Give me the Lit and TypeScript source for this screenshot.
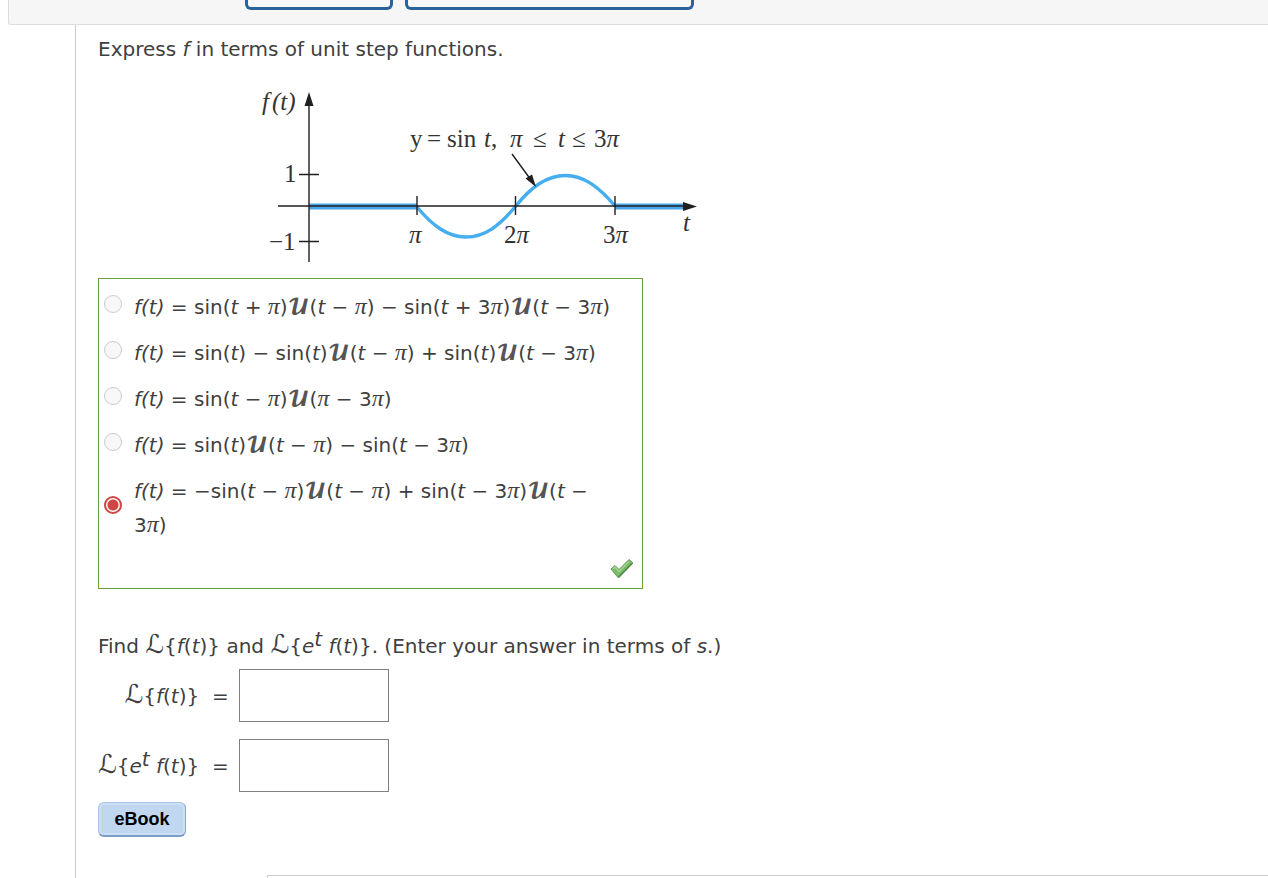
import { LitElement, html, svg, css } from "lit";
import { customElement, state } from "lit/decorators.js";

const pi = html`<i class="pi">π</i>`;
const t = html`<i>t</i>`;
const step = html`<span class="script step">𝓤</span>`;
const laplace = html`<span class="script laplace">ℒ</span>`;
const ft = html`<i>f</i>(${t})`;
const et = html`<i>e</i><sup>t</sup>`;

const options = [
  html`<i>f(t)</i> = sin(${t} + ${pi})${step}(${t} − ${pi}) − sin(${t} + 3${pi})${step}(${t} − 3${pi})`,
  html`<i>f(t)</i> = sin(${t}) − sin(${t})${step}(${t} − ${pi}) + sin(${t})${step}(${t} − 3${pi})`,
  html`<i>f(t)</i> = sin(${t} − ${pi})${step}(${pi} − 3${pi})`,
  html`<i>f(t)</i> = sin(${t})${step}(${t} − ${pi}) − sin(${t} − 3${pi})`,
  html`<i>f(t)</i> = −sin(${t} − ${pi})${step}(${t} − ${pi}) + sin(${t} − 3${pi})${step}(${t} − 3${pi})`,
];

@customElement("function-graph")
class FunctionGraph extends LitElement {
  static styles = css`
    :host { display: block; }
    svg { display: block; }
    text { font: 25px "Liberation Serif", serif; fill: #333; }
    .it { font-style: italic; }
    .axis { stroke: #231f20; stroke-width: 1.4; fill: none; }
    .curve { stroke: #46adee; stroke-width: 3.4; fill: none; }
    .flat { stroke: #46a6e8; stroke-width: 6; }
    .head { fill: #231f20; }
  `;
  render() {
    return html`<svg width="450" height="184" viewBox="256 84 450 184" role="img" aria-label="Graph of f(t)">
      ${svg`
        <path class="flat" d="M309 206.5H417M615 206.5H686"/>
        <path class="curve" d="M417 207C432 225 447 237 466 237C485 237 499 226 515.500 206.500C530 188 546 175.500 565 175.500C584 175.500 599 187 615 206"/>
        <path class="axis" d="M309 104V262M278 206H686M299 174.500H319M299 241.500H319M417 196V215M515.500 196V215M615 196V215M512 154L531 180"/>
        <path class="head" d="M309 92L313.500 106H304.500ZM697 206.500L683 211V202ZM536 187L525.500 178.500L532 174.500Z"/>
        <text x="262" y="110" class="it">f <tspan x="272">(t)</tspan></text>
        <text x="284" y="182">1</text>
        <text x="269" y="250">−1</text>
        <text x="410" y="147">y</text>
        <text x="427" y="147">=</text>
        <text x="447" y="147">sin</text>
        <text x="484" y="147"><tspan class="it">t</tspan>,</text>
        <text x="510" y="147" class="it">π</text>
        <text x="533" y="147">≤</text>
        <text x="558" y="147" class="it">t</text>
        <text x="572" y="147">≤</text>
        <text x="594" y="147">3<tspan class="it">π</tspan></text>
        <text x="409" y="243" class="it">π</text>
        <text x="504" y="243">2<tspan class="it">π</tspan></text>
        <text x="603" y="243">3<tspan class="it">π</tspan></text>
        <text x="683" y="231" class="it">t</text>
      `}
    </svg>`;
  }
}

@customElement("app-root")
class AppRoot extends LitElement {
  @state() selected = 4;

  static styles = css`
    :host {
      display: flex; flex-direction: column; min-height: 100vh; overflow: hidden;
      box-sizing: border-box; background: #fff; color: #404040;
      font: 20px/34px Verdana, "DejaVu Sans", sans-serif;
    }
    * { box-sizing: border-box; }
    .toolbar {
      display: flex; gap: 12px; height: 25px; margin-left: 8px; padding-left: 236px;
      background: #f6f6f6; border: solid #ddd; border-width: 0 0 1px 1px; border-radius: 0 0 0 3px;
    }
    .tool {
      width: 148px; height: 10px; padding: 0; background: #f8f8f8;
      border: 3px solid #29639a; border-top: 0; border-radius: 0 0 6px 6px;
    }
    .wide { width: 289px; }
    .question {
      flex: 1; display: flex; flex-direction: column; align-items: flex-start;
      margin-left: 75px; padding: 7px 0 0 22px; border-left: 1px solid #ccc;
    }
    p { margin: 0; }
    function-graph { margin: 18px 0 10px 158px; }
    .choices {
      width: 100%; max-width: 545px; margin: 0; padding: 11px 8px 8px 5px;
      border: 1px solid #6a9f3c; display: flex; flex-direction: column; gap: 12px;
    }
    .choice { display: flex; align-items: center; gap: 12px; padding-right: 8px; }
    .radio {
      flex: none; appearance: none; width: 18px; height: 18px; margin: 0 0 6px; border-radius: 50%;
      border: 1px solid #ccc; background: #f8f8f8;
    }
    .radio:checked {
      border: 2px solid #cf4744;
      background: radial-gradient(circle, #cf4744 5px, #fff 6px);
    }
    .check { align-self: flex-end; display: block; margin-top: 4px; }
    .pi { font-family: "Liberation Serif", serif; font-size: 24px; line-height: 1; }
    .script { line-height: 1; }
    .step { font-family: "DejaVu Math TeX Gyre", serif; color: #555; }
    .laplace { font-family: "DejaVu Sans", serif; font-size: 26px; }
    sup { font-size: 20px; font-style: italic; line-height: 0; vertical-align: 7px; }
    .find { margin-top: 40px; }
    .answers {
      display: grid; grid-template-columns: auto 150px; align-items: center;
      justify-items: end; gap: 17px 10px; margin-top: 6px;
    }
    .answer { width: 150px; height: 53px; border: 1px solid #808080; border-radius: 0; background: #fff; font: inherit; padding: 0 8px; }
    .ebook {
      width: 88px; height: 35px; margin-top: 10px; padding: 0; color: #000;
      font: bold 18px "Liberation Sans Narrow", "Liberation Sans", sans-serif;
      background: #c1d7f0; border: 1px solid #a9c5ea; border-bottom: 2px solid #7b9ccb;
      border-right-color: #86a5d2; border-radius: 6px; box-shadow: inset 0 0 0 2px #cddff2;
    }
    .next { align-self: stretch; height: 3px; margin: auto 0 0 169px; border: solid #ccc; border-width: 1px 0 0 1px; }
  `;

  render() {
    return html`
      <header class="toolbar">
        <button class="tool" aria-label="Previous"></button>
        <button class="tool wide" aria-label="Next"></button>
      </header>
      <main class="question">
        <p>Express <i>f</i> in terms of unit step functions.</p>
        <function-graph></function-graph>
        <div class="choices" role="radiogroup">
          ${options.map((o, i) => html`
            <div class="choice">
              <input class="radio" type="radio" name="f" id="f${i}"
                .checked=${this.selected === i} @change=${() => (this.selected = i)}>
              <label for="f${i}">${o}</label>
            </div>`)}
          <svg class="check" width="24" height="22" viewBox="0 0 24 22" aria-label="Correct">
            <path d="M1 11L5 7.500L9 11.500L19 1.500L23 5L8.500 20Z" fill="#7dbb6b" stroke="#5f9e52" stroke-linejoin="round"/>
            <path d="M3 11L5 9L9 13.500L19 3.500" fill="none" stroke="#a4d491" stroke-width="1.500"/>
            <path d="M8.500 19L22 5.500" stroke="#4a8945" stroke-width="1.500"/>
          </svg>
        </div>
        <p class="find">Find ${laplace}{${ft}} and ${laplace}{${et} ${ft}}. (Enter your answer in terms of <i>s</i>.)</p>
        <div class="answers">
          <label for="a1">${laplace}{${ft}} &nbsp;=</label>
          <input class="answer" id="a1" type="text">
          <label for="a2">${laplace}{${et} ${ft}} &nbsp;=</label>
          <input class="answer" id="a2" type="text">
        </div>
        <button class="ebook">eBook</button>
        <div class="next"></div>
      </main>
    `;
  }
}
